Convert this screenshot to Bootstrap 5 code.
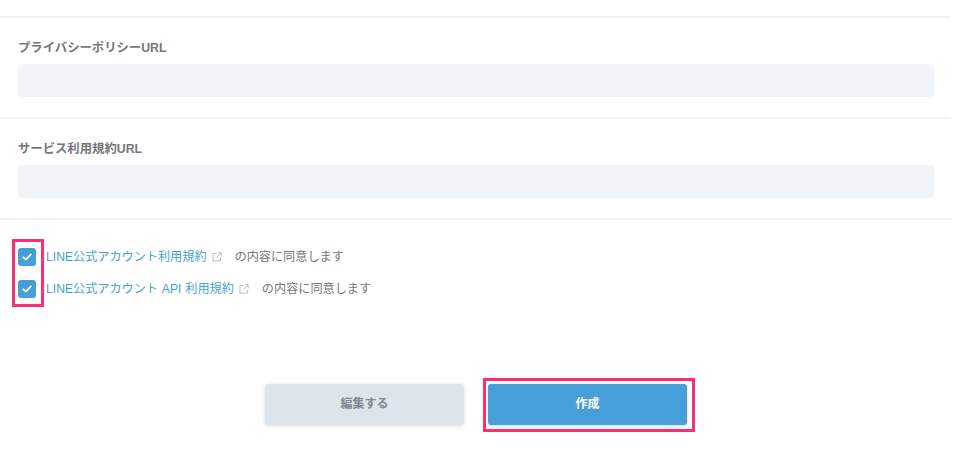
<!DOCTYPE html>
<html lang="ja">
<head>
<meta charset="utf-8">
<title>LINE</title>
<link rel="stylesheet" href="https://cdn.jsdelivr.net/npm/bootstrap@5.3.0/dist/css/bootstrap.min.css">
<style>
html,body{height:452px;overflow:hidden;background:#fff}
body{font-family:"Liberation Sans","Noto Sans CJK JP",sans-serif;color:#777}
.pagewrap{width:951px;padding-top:15.5px;position:relative}
.fieldrow{height:101.25px;border-top:2px solid #eef2f6;padding:22.5px 17px 0 18px}
.fieldrow-last{height:auto;padding:0}
.fieldlabel{font-size:12.35px;font-weight:700;line-height:17px;margin-bottom:7px;color:#777}
.fieldbox{height:33px;background:#f1f5f8;border:0;border-radius:4px;width:100%}
.agreelist{padding:27.5px 0 0 18px;gap:14px}
.agreeline{height:18px;font-size:12.15px;line-height:18px;color:#777;word-spacing:.5px}
.tick{width:18px;height:18px;background:#479fd9;border-radius:3px;flex:none;margin-right:10px}
.agreelink{color:#479fd9;text-decoration:none}
.extlink{margin:1px 13px 0 5px}
.actionbar{margin-top:86px;padding-left:265px;gap:24px}
.actbtn{width:199px;height:41px;font-size:12px;font-weight:700;border:0;border-radius:3px;padding:0;box-shadow:0 1px 4px rgba(60,80,100,.2)}
.actbtn-edit{background:#dee4ec;color:#7f8790}
.actbtn-make{background:#479fd9;color:#fff}
.hilite{position:absolute;border:3px solid #fb2d73;pointer-events:none}
.hilite-a{left:12px;top:239px;width:32px;height:68px}
.hilite-b{left:483px;top:378px;width:212px;height:54px}
</style>
</head>
<body>
<div class="pagewrap">
  <div class="fieldrow">
    <div class="fieldlabel">プライバシーポリシーURL</div>
    <div class="fieldbox"></div>
  </div>
  <div class="fieldrow">
    <div class="fieldlabel">サービス利用規約URL</div>
    <div class="fieldbox"></div>
  </div>
  <div class="fieldrow fieldrow-last">
    <div class="agreelist d-flex flex-column">
      <div class="agreeline d-flex align-items-center">
        <span class="tick d-flex align-items-center justify-content-center"><svg width="10" height="8" viewBox="0 0 10 8"><path d="M1.2 4.2 3.8 6.6 8.8 1.4" fill="none" stroke="#fff" stroke-width="1.6" stroke-linecap="round" stroke-linejoin="round"/></svg></span>
        <a class="agreelink" href="#">LINE公式アカウント利用規約</a>
        <svg class="extlink" width="10" height="10" viewBox="0 0 10 10"><path d="M4 1.5H1V9H8.5V6M5.5 .8H9.2V4.5M9 1 4.5 5.5" fill="none" stroke="#b5b5b5" stroke-width=".9"/></svg>
        <span>の内容に同意します</span>
      </div>
      <div class="agreeline d-flex align-items-center">
        <span class="tick d-flex align-items-center justify-content-center"><svg width="10" height="8" viewBox="0 0 10 8"><path d="M1.2 4.2 3.8 6.6 8.8 1.4" fill="none" stroke="#fff" stroke-width="1.6" stroke-linecap="round" stroke-linejoin="round"/></svg></span>
        <a class="agreelink" href="#">LINE公式アカウント API 利用規約</a>
        <svg class="extlink" width="10" height="10" viewBox="0 0 10 10"><path d="M4 1.5H1V9H8.5V6M5.5 .8H9.2V4.5M9 1 4.5 5.5" fill="none" stroke="#b5b5b5" stroke-width=".9"/></svg>
        <span>の内容に同意します</span>
      </div>
    </div>
    <div class="actionbar d-flex">
      <button type="button" class="btn actbtn actbtn-edit">編集する</button>
      <button type="button" class="btn actbtn actbtn-make">作成</button>
    </div>
  </div>
  <div class="hilite hilite-a"></div>
  <div class="hilite hilite-b"></div>
</div>
<script src="https://cdn.jsdelivr.net/npm/bootstrap@5.3.0/dist/js/bootstrap.bundle.min.js"></script>
</body>
</html>
